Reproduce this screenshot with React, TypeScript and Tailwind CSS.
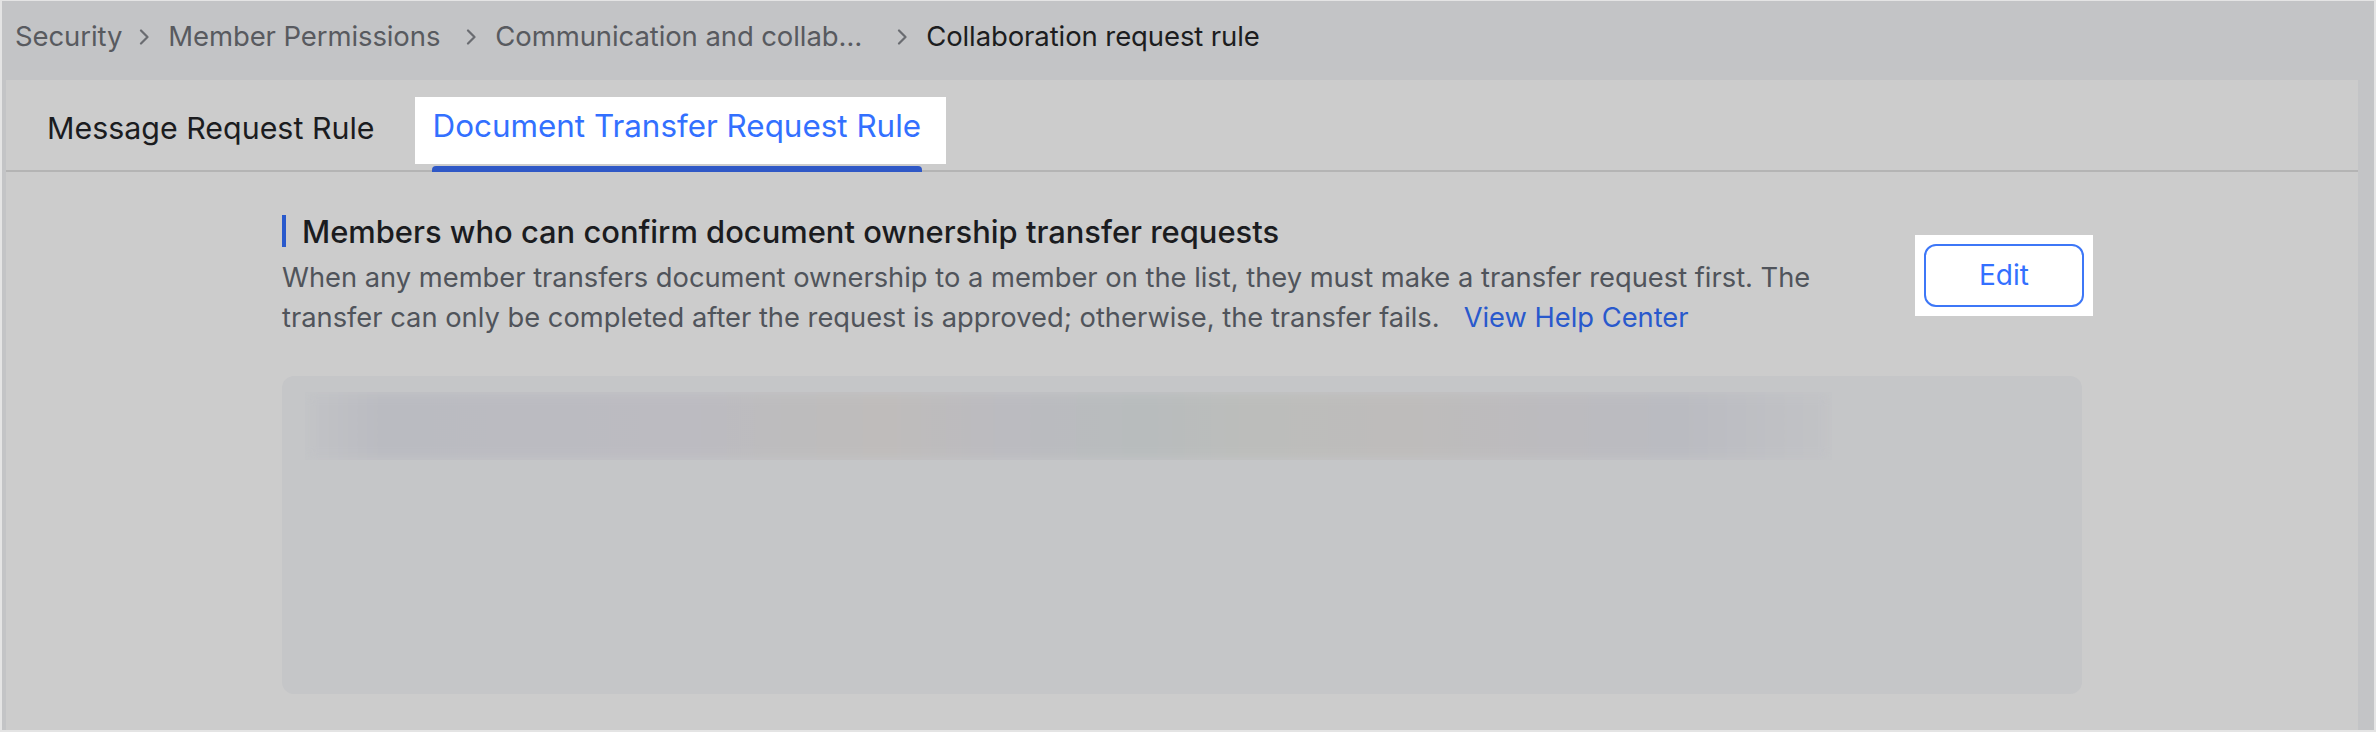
import React from 'react'

const crumbs = ['Security', 'Member Permissions', 'Communication and collab…']
const crumbGap = ['', 'mr-[9px]', 'mr-[18px]']

function Chevron() {
  return (
    <svg width="12" height="16" viewBox="0 0 12 16" fill="none" className="shrink-0">
      <path d="M2 1.5 8.5 8 2 14.5" stroke="#6a6c71" strokeWidth="2.2" strokeLinecap="round" strokeLinejoin="round" />
    </svg>
  )
}

export default function App() {
  return (
    <div
      className="w-[2376px] h-[732px] flex flex-col bg-[#c3c4c6] border-t border-l-2 border-r-2 border-b-2 border-[#e4e4e4] overflow-hidden"
      style={{ fontFamily: 'Inter, "Noto Sans", sans-serif' }}
    >
      {/* Breadcrumb */}
      <div className="h-[79px] shrink-0 flex items-center pl-[13px] pb-[8px] text-[27.5px] tracking-[-0.1px] text-[#585a5f]">
        {crumbs.map((c, i) => (
          <React.Fragment key={c}>
            <span className={crumbGap[i]}>{c}</span>
            <span className="mx-[17px] flex items-center"><Chevron /></span>
          </React.Fragment>
        ))}
        <span className="text-[#1c1d20]">Collaboration request rule</span>
      </div>

      {/* Panel */}
      <div className="flex-1 ml-[4px] mr-[16px] bg-[#cccccc] flex flex-col">
        {/* Tabs */}
        <div className="h-[92px] shrink-0 flex border-b-2 border-[#b4b4b4] pl-[41px]">
          <div className="flex items-center pt-[8px] text-[30.4px] text-[#1b1c1f]">Message Request Rule</div>
          <div className="relative ml-[40px] mt-[17px] h-[67px] pl-[18px] pr-[25px] pb-[8px] bg-white flex items-center text-[31.4px] text-[#3370ff]">
            Document Transfer Request Rule
            <div className="absolute left-[17px] right-[24px] top-[69px] h-[6px] rounded-t-[4px] bg-[#2f58c6]" />
          </div>
        </div>

        {/* Section */}
        <div className="pt-[40px] pl-[276px] pr-[276px]">
          <div className="flex items-center justify-between">
            <div>
              <div className="flex items-start h-[40px]">
                <div className="mt-[3px] w-[4px] h-[32px] bg-[#2959cc]" />
                <div className="ml-[16px] text-[30.9px] font-medium leading-[39px] text-[#1b1c1f]">
                  Members who can confirm document ownership transfer requests
                </div>
              </div>
              <p className="mt-[6px] text-[27.3px] leading-[40px] text-[#50545b]">
                When any member transfers document ownership to a member on the list, they must make a transfer request first. The
                <br />
                transfer can only be completed after the request is approved; otherwise, the transfer fails.
                <a className="ml-[24px] text-[#2959cc]">View Help Center</a>
              </p>
            </div>
            <div className="bg-white p-[9px] -mr-[11px]">
              <button className="w-[160px] h-[63px] rounded-[12px] border-2 border-[#3d77f7] text-[28px] text-[#3370ff] bg-white">
                Edit
              </button>
            </div>
          </div>

          {/* Blurred preview card */}
          <div className="mt-[38px] h-[318px] rounded-[12px] bg-[#c5c6c8] pt-[16px] pl-[23px]">
            <div className="w-[1527px] h-[68px] overflow-hidden">
              <div className="w-full h-full blur-[6px] bg-[linear-gradient(90deg,#c2c3c6_0%,#babbc1_5%,#bcbbc1_25%,#bdbcbd_32%,#bfbcbb_38%,#bbbbc0_46%,#b8bcbd_55%,#bcbdbb_62%,#bebcbb_72%,#bcbbbf_82%,#babbc1_90%,#c2c3c6_100%)]" />
            </div>
          </div>
        </div>
      </div>
    </div>
  )
}
